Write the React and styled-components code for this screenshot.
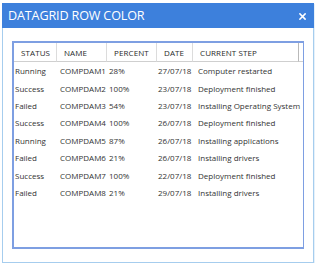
import React from "react";
import styled, { createGlobalStyle } from "styled-components";

const Global = createGlobalStyle`
  html, body { margin: 0; padding: 0; background: #ffffff; }
  body { font-family: "Open Sans", "Noto Sans", sans-serif; }
`;

const Page = styled.div`
  padding: 3px 0 0 2px;
`;

const Window = styled.div`
  width: 312px;
  height: 260px;
  box-sizing: border-box;
  border: 1px solid #a6cdee;
  border-top: none;
  display: flex;
  flex-direction: column;
  background: #ffffff;
  box-shadow: 1px 1px 0 #e6f1fa;
`;

const TitleBar = styled.div`
  height: 25px;
  margin: 0 -1px;
  background: #3d80dc;
  color: #ffffff;
  display: flex;
  align-items: center;
  justify-content: space-between;
  padding: 1px 8px 0 6px;
  box-sizing: border-box;
  flex-shrink: 0;
`;

const Title = styled.span`
  font-size: 12.6px;
  letter-spacing: -0.15px;
  line-height: 1;
`;

const Close = styled.svg`
  width: 7px;
  height: 7px;
  display: block;
`;

const Body = styled.div`
  flex: 1;
  padding: 13px 9px 13px 9px;
  display: flex;
  min-height: 0;
`;

const Grid = styled.div`
  flex: 1;
  border: 2px solid #7e9fe2;
  border-right-width: 1.5px;
  display: grid;
  grid-template-columns: 43px 50px 50px 36px 106px 1fr;
  grid-template-rows: 19px;
  grid-auto-rows: 17.4px;
  align-content: start;
  font-size: 8px;
  color: #333333;
  background: #ffffff;
`;

const HeaderCell = styled.div`
  box-sizing: border-box;
  border-right: 1px solid ${(p) => (p.$last ? "#b9b9b9" : "#dcdcdc")};
  border-bottom: 1px solid #cfcfcf;
  padding-left: 7px;
  display: flex;
  align-items: center;
  font-size: 8px;
  letter-spacing: 0.1px;
  color: #2a2a2a;
  white-space: nowrap;
`;

const Filler = styled.div`
  box-sizing: border-box;
  border-bottom: 1px solid #cfcfcf;
`;

const Cell = styled.div`
  display: flex;
  align-items: center;
  padding-left: ${(p) => p.$pad}px;
  white-space: nowrap;
`;

const columns = ["STATUS", "NAME", "PERCENT", "DATE", "CURRENT STEP"];
const pads = [1, 3, 2, 1, 5];

const rows = [
  ["Running", "COMPDAM1", "28%", "27/07/18", "Computer restarted"],
  ["Success", "COMPDAM2", "100%", "23/07/18", "Deployment finished"],
  ["Failed", "COMPDAM3", "54%", "23/07/18", "Installing Operating System"],
  ["Success", "COMPDAM4", "100%", "26/07/18", "Deployment finished"],
  ["Running", "COMPDAM5", "87%", "26/07/18", "Installing applications"],
  ["Failed", "COMPDAM6", "21%", "26/07/18", "Installing drivers"],
  ["Success", "COMPDAM7", "100%", "22/07/18", "Deployment finished"],
  ["Failed", "COMPDAM8", "21%", "29/07/18", "Installing drivers"],
];

export default function App() {
  return (
    <>
      <Global />
      <Page>
        <Window>
          <TitleBar>
            <Title>DATAGRID ROW COLOR</Title>
            <Close viewBox="0 0 8 8">
              <path d="M1 1 L7 7 M7 1 L1 7" stroke="#ffffff" strokeWidth="1.8" strokeLinecap="square" />
            </Close>
          </TitleBar>
          <Body>
            <Grid>
              {columns.map((c, i) => (
                <HeaderCell key={c} $last={i === columns.length - 1}>
                  {c}
                </HeaderCell>
              ))}
              <Filler />
              {rows.map((r, ri) => (
                <React.Fragment key={ri}>
                  {r.map((v, ci) => (
                    <Cell key={ci} $pad={pads[ci]}>
                      {v}
                    </Cell>
                  ))}
                  <Cell $pad={0} />
                </React.Fragment>
              ))}
            </Grid>
          </Body>
        </Window>
      </Page>
    </>
  );
}
